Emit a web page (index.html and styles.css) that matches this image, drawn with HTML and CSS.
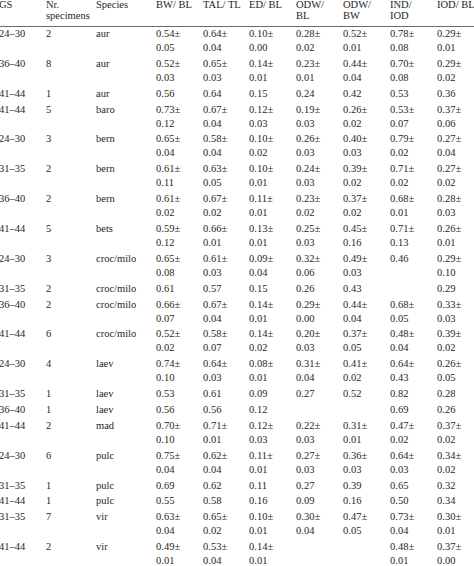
FILE: index.html
```html
<!DOCTYPE html>
<html>
<head>
<meta charset="utf-8">
<link rel="stylesheet" href="styles.css">
</head>
<body>
<table class="data">
<colgroup>
<col class="c-gs"><col class="c-nr"><col class="c-sp"><col class="c-v"><col class="c-v2"><col class="c-v"><col class="c-v"><col class="c-v"><col class="c-v"><col class="c-v">
</colgroup>
<thead>
<tr><th>GS</th><th>Nr.<br>specimens</th><th>Species</th><th>BW/ BL</th><th>TAL/ TL</th><th>ED/ BL</th><th>ODW/<br>BL</th><th>ODW/<br>BW</th><th>IND/<br>IOD</th><th>IOD/ BL</th></tr>
</thead>
<tbody>
<tr><td>24–30</td><td>2</td><td>aur</td><td>0.54±<br>0.05</td><td>0.64±<br>0.04</td><td>0.10±<br>0.00</td><td>0.28±<br>0.02</td><td>0.52±<br>0.01</td><td>0.78±<br>0.08</td><td>0.29±<br>0.01</td></tr>
<tr><td>36–40</td><td>8</td><td>aur</td><td>0.52±<br>0.03</td><td>0.65±<br>0.03</td><td>0.14±<br>0.01</td><td>0.23±<br>0.01</td><td>0.44±<br>0.04</td><td>0.70±<br>0.08</td><td>0.29±<br>0.02</td></tr>
<tr><td>41–44</td><td>1</td><td>aur</td><td>0.56</td><td>0.64</td><td>0.15</td><td>0.24</td><td>0.42</td><td>0.53</td><td>0.36</td></tr>
<tr><td>41–44</td><td>5</td><td>baro</td><td>0.73±<br>0.12</td><td>0.67±<br>0.04</td><td>0.12±<br>0.03</td><td>0.19±<br>0.03</td><td>0.26±<br>0.02</td><td>0.53±<br>0.07</td><td>0.37±<br>0.06</td></tr>
<tr><td>24–30</td><td>3</td><td>bern</td><td>0.65±<br>0.04</td><td>0.58±<br>0.04</td><td>0.10±<br>0.02</td><td>0.26±<br>0.03</td><td>0.40±<br>0.03</td><td>0.79±<br>0.02</td><td>0.27±<br>0.04</td></tr>
<tr><td>31–35</td><td>2</td><td>bern</td><td>0.61±<br>0.11</td><td>0.63±<br>0.05</td><td>0.10±<br>0.01</td><td>0.24±<br>0.03</td><td>0.39±<br>0.02</td><td>0.71±<br>0.02</td><td>0.27±<br>0.02</td></tr>
<tr><td>36–40</td><td>2</td><td>bern</td><td>0.61±<br>0.02</td><td>0.67±<br>0.02</td><td>0.11±<br>0.01</td><td>0.23±<br>0.02</td><td>0.37±<br>0.02</td><td>0.68±<br>0.01</td><td>0.28±<br>0.03</td></tr>
<tr><td>41–44</td><td>5</td><td>bets</td><td>0.59±<br>0.12</td><td>0.66±<br>0.01</td><td>0.13±<br>0.01</td><td>0.25±<br>0.03</td><td>0.45±<br>0.16</td><td>0.71±<br>0.13</td><td>0.26±<br>0.01</td></tr>
<tr><td>24–30</td><td>3</td><td>croc/milo</td><td>0.65±<br>0.08</td><td>0.61±<br>0.03</td><td>0.09±<br>0.04</td><td>0.32±<br>0.06</td><td>0.49±<br>0.03</td><td>0.46</td><td>0.29±<br>0.10</td></tr>
<tr><td>31–35</td><td>2</td><td>croc/milo</td><td>0.61</td><td>0.57</td><td>0.15</td><td>0.26</td><td>0.43</td><td></td><td>0.29</td></tr>
<tr><td>36–40</td><td>2</td><td>croc/milo</td><td>0.66±<br>0.07</td><td>0.67±<br>0.04</td><td>0.14±<br>0.01</td><td>0.29±<br>0.00</td><td>0.44±<br>0.04</td><td>0.68±<br>0.05</td><td>0.33±<br>0.03</td></tr>
<tr><td>41–44</td><td>6</td><td>croc/milo</td><td>0.52±<br>0.02</td><td>0.58±<br>0.07</td><td>0.14±<br>0.02</td><td>0.20±<br>0.03</td><td>0.37±<br>0.05</td><td>0.48±<br>0.04</td><td>0.39±<br>0.02</td></tr>
<tr><td>24–30</td><td>4</td><td>laev</td><td>0.74±<br>0.10</td><td>0.64±<br>0.03</td><td>0.08±<br>0.01</td><td>0.31±<br>0.04</td><td>0.41±<br>0.02</td><td>0.64±<br>0.43</td><td>0.26±<br>0.05</td></tr>
<tr><td>31–35</td><td>1</td><td>laev</td><td>0.53</td><td>0.61</td><td>0.09</td><td>0.27</td><td>0.52</td><td>0.82</td><td>0.28</td></tr>
<tr><td>36–40</td><td>1</td><td>laev</td><td>0.56</td><td>0.56</td><td>0.12</td><td></td><td></td><td>0.69</td><td>0.26</td></tr>
<tr><td>41–44</td><td>2</td><td>mad</td><td>0.70±<br>0.10</td><td>0.71±<br>0.01</td><td>0.12±<br>0.03</td><td>0.22±<br>0.03</td><td>0.31±<br>0.01</td><td>0.47±<br>0.02</td><td>0.37±<br>0.02</td></tr>
<tr><td>24–30</td><td>6</td><td>pulc</td><td>0.75±<br>0.04</td><td>0.62±<br>0.04</td><td>0.11±<br>0.01</td><td>0.27±<br>0.03</td><td>0.36±<br>0.03</td><td>0.64±<br>0.03</td><td>0.34±<br>0.02</td></tr>
<tr><td>31–35</td><td>1</td><td>pulc</td><td>0.69</td><td>0.62</td><td>0.11</td><td>0.27</td><td>0.39</td><td>0.65</td><td>0.32</td></tr>
<tr><td>41–44</td><td>1</td><td>pulc</td><td>0.55</td><td>0.58</td><td>0.16</td><td>0.09</td><td>0.16</td><td>0.50</td><td>0.34</td></tr>
<tr><td>31–35</td><td>7</td><td>vir</td><td>0.63±<br>0.04</td><td>0.65±<br>0.02</td><td>0.10±<br>0.01</td><td>0.30±<br>0.04</td><td>0.47±<br>0.05</td><td>0.73±<br>0.04</td><td>0.30±<br>0.01</td></tr>
<tr><td>41–44</td><td>2</td><td>vir</td><td>0.49±<br>0.01</td><td>0.53±<br>0.04</td><td>0.14±<br>0.01</td><td></td><td></td><td>0.48±<br>0.01</td><td>0.37±<br>0.00</td></tr>
</tbody>
</table>
</body>
</html>
```
FILE: styles.css
```css
html, body {
  margin: 0;
  padding: 0;
  background: #ffffff;
  overflow: hidden;
}
body {
  width: 474px;
  height: 566px;
}
.data {
  border-collapse: collapse;
  table-layout: fixed;
  width: 485px;
  margin: -1px 0 0 -1px;
  font-family: "Liberation Serif", "Times New Roman", serif;
  font-size: 10.5px;
  color: #262626;
}
.c-gs { width: 47px; }
.c-nr { width: 50px; }
.c-sp { width: 60px; }
.c-v  { width: 47px; }
.c-v2 { width: 46px; }
.data th {
  font-weight: normal;
  text-align: left;
  vertical-align: top;
  line-height: 11px;
  padding: 0 0 5px 0;
  border-bottom: 1px solid #6a6a6a;
  white-space: nowrap;
}
.data td {
  text-align: left;
  vertical-align: top;
  line-height: 14px;
  padding: 0 0 1.86px 0;
  white-space: nowrap;
}
```
